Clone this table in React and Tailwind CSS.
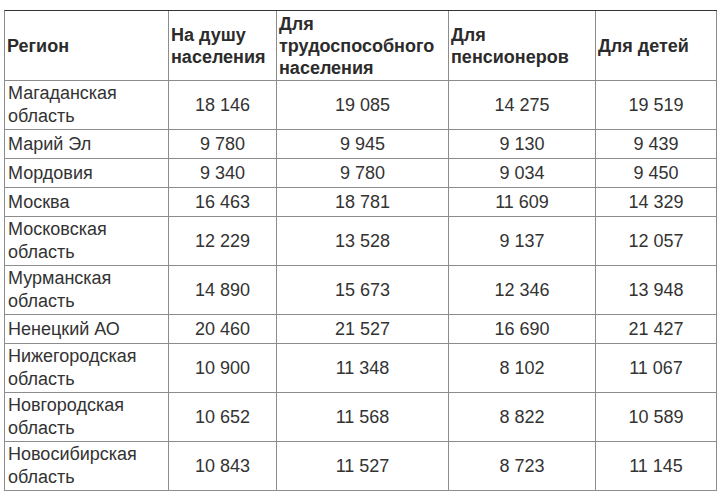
const HEAD = [
  ['Регион'],
  ['На душу', 'населения'],
  ['Для', 'трудоспособного', 'населения'],
  ['Для', 'пенсионеров'],
  ['Для детей'],
]

const ROWS = [
  [['Магаданская', 'область'], '18 146', '19 085', '14 275', '19 519'],
  [['Марий Эл'], '9 780', '9 945', '9 130', '9 439'],
  [['Мордовия'], '9 340', '9 780', '9 034', '9 450'],
  [['Москва'], '16 463', '18 781', '11 609', '14 329'],
  [['Московская', 'область'], '12 229', '13 528', '9 137', '12 057'],
  [['Мурманская', 'область'], '14 890', '15 673', '12 346', '13 948'],
  [['Ненецкий АО'], '20 460', '21 527', '16 690', '21 427'],
  [['Нижегородская', 'область'], '10 900', '11 348', '8 102', '11 067'],
  [['Новгородская', 'область'], '10 652', '11 568', '8 822', '10 589'],
  [['Новосибирская', 'область'], '10 843', '11 527', '8 723', '11 145'],
]

function Lines({ lines }) {
  return lines.map((l, i) => (
    <span key={i} className="block whitespace-nowrap">{l}</span>
  ))
}

export default function App() {
  return (
    <div className="w-[720px] h-[500px] bg-white pt-[10px] pl-[4px] font-['Liberation_Sans',Arial,sans-serif] text-[#333]">
      <table className="table-fixed border-separate border-spacing-0 border-t border-t-[#333] border-l border-l-[#8c8c8c]">
        <colgroup>
          <col className="w-[164px]" />
          <col className="w-[108px]" />
          <col className="w-[172px]" />
          <col className="w-[147px]" />
          <col className="w-[121px]" />
        </colgroup>
        <thead>
          <tr>
            {HEAD.map((h, i) => (
              <th
                key={i}
                className="h-[70px] align-middle text-left font-bold text-[18px] leading-[22px] text-[#2b2b2b] pl-[2px] border-r border-b border-[#8c8c8c]"
              >
                <Lines lines={h} />
              </th>
            ))}
          </tr>
        </thead>
        <tbody>
          {ROWS.map((r, i) => {
            const tall = r[0].length > 1
            return (
              <tr key={i}>
                <td
                  className={`${tall ? 'h-[49px]' : 'h-[29px]'} align-middle text-left text-[18px] leading-[23px] pl-[3px] border-r border-b border-[#8c8c8c]`}
                >
                  <Lines lines={r[0]} />
                </td>
                {r.slice(1).map((v, j) => (
                  <td
                    key={j}
                    className={`${tall ? 'h-[49px]' : 'h-[29px]'} align-middle text-center text-[18px] leading-[23px] border-r border-b border-[#8c8c8c]`}
                  >
                    {v}
                  </td>
                ))}
              </tr>
            )
          })}
        </tbody>
      </table>
    </div>
  )
}
